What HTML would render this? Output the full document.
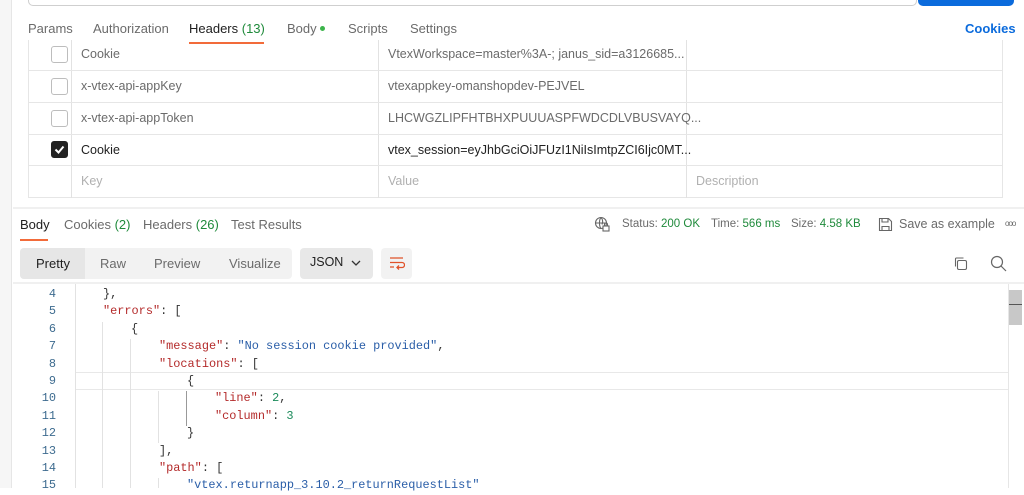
<!DOCTYPE html><html><head><style>
*{margin:0;padding:0;box-sizing:border-box}
body{width:1024px;height:488px;overflow:hidden;background:#fff;font-family:"Liberation Sans",sans-serif;font-size:12.5px;color:#212121;position:relative}
.a{position:absolute;white-space:nowrap}
.g{color:#6b6b6b}
.gr{color:#1f8a3b}
.mono{font-family:"Liberation Mono",monospace;font-size:11.9px}
.ln{position:absolute;left:20px;width:36px;text-align:right;color:#3d6b8f}
.k{color:#b42b2b}.s{color:#2a5ea8}.n{color:#1a8a5a}.p{color:#333}
.vl{position:absolute;width:1px;background:#e2e2e2}
.cb{position:absolute;left:51px;width:17px;height:17px;border:1px solid #bdbdbd;border-radius:3px;background:#fff}
</style></head><body>
<div class="a" style="left:0;top:0;width:12px;height:488px;background:#f6f6f6;border-right:1px solid #e6e6e6"></div>
<div class="a" style="left:28px;top:-10px;width:889px;height:16px;border:1px solid #cfcfcf;border-radius:5px"></div>
<div class="a" style="left:918px;top:-10px;width:96px;height:16px;background:#0b6bdc;border-radius:5px"></div>
<div class="a g" style="left:28px;top:21px;font-size:13px">Params</div>
<div class="a g" style="left:93px;top:21px;font-size:13px">Authorization</div>
<div class="a" style="left:189px;top:21px;font-size:13px">Headers <span class="gr">(13)</span></div>
<div class="a" style="left:189px;top:42px;width:75px;height:2px;background:#f26b3a"></div>
<div class="a g" style="left:287px;top:21px;font-size:13px">Body <span style="display:inline-block;width:5px;height:5px;border-radius:50%;background:#3cb44b;vertical-align:2px"></span></div>
<div class="a g" style="left:348px;top:21px;font-size:13px">Scripts</div>
<div class="a g" style="left:410px;top:21px;font-size:13px">Settings</div>
<div class="a" style="left:965px;top:21px;font-size:13px;color:#0b6bdc;font-weight:bold">Cookies</div>
<!-- table -->
<div class="a" style="left:28px;top:40px;width:975px;height:158px;border:1px solid #e6e6e6;border-top:none"></div>
<div class="vl" style="left:71px;top:40px;height:158px"></div>
<div class="vl" style="left:378px;top:40px;height:158px"></div>
<div class="vl" style="left:686px;top:40px;height:158px"></div>
<div class="a" style="left:28px;top:70px;width:975px;height:1px;background:#e6e6e6"></div>
<div class="a" style="left:28px;top:102px;width:975px;height:1px;background:#e6e6e6"></div>
<div class="a" style="left:28px;top:134px;width:975px;height:1px;background:#e6e6e6"></div>
<div class="a" style="left:28px;top:165px;width:975px;height:1px;background:#e6e6e6"></div>
<div class="cb" style="top:46px"></div><div class="cb" style="top:78px"></div><div class="cb" style="top:110px"></div>
<div class="cb" style="top:141px;background:#222;border-color:#222"><svg width="15" height="15" viewBox="0 0 15 15" style="position:absolute;left:0;top:0"><path d="M3.5 7.5l3 3 5-6" stroke="#fff" stroke-width="2" fill="none"/></svg></div>
<div class="a g" style="left:81px;top:47px">Cookie</div>
<div class="a g" style="left:81px;top:79px">x-vtex-api-appKey</div>
<div class="a g" style="left:81px;top:111px">x-vtex-api-appToken</div>
<div class="a" style="left:81px;top:143px">Cookie</div>
<div class="a" style="left:81px;top:174px;color:#b0b0b0">Key</div>
<div class="a g" style="left:388px;top:47px">VtexWorkspace=master%3A-; janus_sid=a3126685...</div>
<div class="a g" style="left:388px;top:79px">vtexappkey-omanshopdev-PEJVEL</div>
<div class="a g" style="left:388px;top:111px">LHCWGZLIPFHTBHXPUUUASPFWDCDLVBUSVAYQ...</div>
<div class="a" style="left:388px;top:143px">vtex_session=eyJhbGciOiJFUzI1NiIsImtpZCI6Ijc0MT...</div>
<div class="a" style="left:388px;top:174px;color:#b0b0b0">Value</div>
<div class="a" style="left:696px;top:174px;color:#b0b0b0">Description</div>
<div class="a" style="left:13px;top:207px;width:1011px;height:2px;background:#f0f0f0"></div>
<!-- response -->
<div class="a" style="left:20px;top:217px;font-size:13px">Body</div>
<div class="a" style="left:20px;top:239px;width:28px;height:2px;background:#f26b3a"></div>
<div class="a g" style="left:64px;top:217px;font-size:13px">Cookies <span class="gr">(2)</span></div>
<div class="a g" style="left:143px;top:217px;font-size:13px">Headers <span class="gr">(26)</span></div>
<div class="a g" style="left:231px;top:217px;font-size:13px">Test Results</div>
<svg class="a" style="left:594px;top:216px" width="16" height="16" viewBox="0 0 16 16" fill="none" stroke="#666" stroke-width="1.1"><circle cx="7" cy="7" r="5.5"/><path d="M1.5 7h11M7 1.5c-2 2-2 9 0 11M7 1.5c2 2 2 5 1 7"/><rect x="9" y="10" width="6" height="5" fill="#fff"/><path d="M10.5 10V8.5a1.5 1.5 0 013 0V10"/></svg>
<div class="a g" style="left:622px;top:218px;font-size:11.5px">Status: <span class="gr">200 OK</span></div>
<div class="a g" style="left:711px;top:218px;font-size:11.5px">Time: <span class="gr">566 ms</span></div>
<div class="a g" style="left:791px;top:218px;font-size:11.5px">Size: <span class="gr">4.58 KB</span></div>
<svg class="a" style="left:878px;top:217px" width="15" height="15" viewBox="0 0 15 15" fill="none" stroke="#666" stroke-width="1.1"><path d="M1.5 1.5h9l3 3v9h-12z"/><path d="M4 1.5v3.5h6V1.5M4 13.5v-4h7v4"/></svg>
<div class="a g" style="left:899px;top:217px;font-size:12.5px">Save as example</div>
<div class="a g" style="left:1005px;top:219px;font-size:8px;letter-spacing:-1px">ooo</div>
<div class="a" style="left:20px;top:248px;width:272px;height:31px;background:#f2f2f2;border-radius:4px"></div>
<div class="a" style="left:20px;top:248px;width:65px;height:31px;background:#e6e6e6;border-radius:4px 0 0 4px"></div>
<div class="a" style="left:36px;top:256px;font-size:13px">Pretty</div>
<div class="a g" style="left:100px;top:256px;font-size:13px">Raw</div>
<div class="a g" style="left:154px;top:256px;font-size:13px">Preview</div>
<div class="a g" style="left:229px;top:256px;font-size:13px">Visualize</div>
<div class="a" style="left:300px;top:248px;width:73px;height:31px;background:#e8e8e8;border-radius:4px"></div>
<div class="a" style="left:310px;top:255px;font-size:12.5px">JSON</div>
<svg class="a" style="left:351px;top:259px" width="10" height="8"><path d="M1 2l4 4 4-4" stroke="#333" stroke-width="1.3" fill="none"/></svg>
<div class="a" style="left:381px;top:248px;width:31px;height:31px;background:#f2f2f2;border-radius:4px"></div>
<svg class="a" style="left:389px;top:256px" width="16" height="15" fill="none" stroke="#e0522a" stroke-width="1.3"><path d="M1 2h13M1 6.5h12a2.5 2.5 0 010 5H8M10 9.5l-2 2 2 2M1 11h4"/></svg>
<svg class="a" style="left:953px;top:256px" width="15" height="15" fill="none" stroke="#666" stroke-width="1.1"><rect x="4.5" y="4.5" width="9" height="9" rx="1.5"/><path d="M2.5 10.5V3a1 1 0 011-1h7"/></svg>
<svg class="a" style="left:990px;top:255px" width="17" height="17" fill="none" stroke="#666" stroke-width="1.2"><circle cx="7" cy="7" r="5.5"/><path d="M11 11l5 5"/></svg>
<div class="a" style="left:13px;top:282px;width:1011px;height:2px;background:#f0f0f0"></div>
<!-- code -->
<div class="a" style="left:1008px;top:284px;width:1px;height:204px;background:#e6e6e6"></div>
<div class="a" style="left:1009px;top:290px;width:13px;height:35px;background:#c8c8c8"></div>
<div class="a" style="left:1009px;top:304px;width:13px;height:1px;background:#555"></div>
<div class="a" style="left:76px;top:372px;width:932px;height:18px;border-top:1px solid #e8e8e8;border-bottom:1px solid #e8e8e8"></div>
<div class="vl" style="left:75px;top:284px;height:204px"></div>
<div class="vl" style="left:102px;top:322px;height:166px"></div>
<div class="vl" style="left:130px;top:339px;height:149px"></div>
<div class="vl" style="left:158px;top:391px;height:52px"></div>
<div class="vl" style="left:158px;top:478px;height:10px"></div>
<div class="vl" style="left:186px;top:391px;height:35px;background:#999"></div>
<div class="mono" style="position:absolute;left:0;top:286px;line-height:17.4px">
<div class="ln" style="top:0">4</div><div class="ln" style="top:17.4px">5</div><div class="ln" style="top:34.8px">6</div><div class="ln" style="top:52.2px">7</div><div class="ln" style="top:69.6px">8</div><div class="ln" style="top:87px">9</div><div class="ln" style="top:104.4px">10</div><div class="ln" style="top:121.8px">11</div><div class="ln" style="top:139.2px">12</div><div class="ln" style="top:156.6px">13</div><div class="ln" style="top:174px">14</div><div class="ln" style="top:191.4px">15</div>
<div class="a" style="left:103px;top:0"><span class="p">},</span></div>
<div class="a" style="left:103px;top:17.4px"><span class="k">"errors"</span><span class="p">: [</span></div>
<div class="a" style="left:131px;top:34.8px"><span class="p">{</span></div>
<div class="a" style="left:159px;top:52.2px"><span class="k">"message"</span><span class="p">: </span><span class="s">"No session cookie provided"</span><span class="p">,</span></div>
<div class="a" style="left:159px;top:69.6px"><span class="k">"locations"</span><span class="p">: [</span></div>
<div class="a" style="left:187px;top:87px"><span class="p">{</span></div>
<div class="a" style="left:215px;top:104.4px"><span class="k">"line"</span><span class="p">: </span><span class="n">2</span><span class="p">,</span></div>
<div class="a" style="left:215px;top:121.8px"><span class="k">"column"</span><span class="p">: </span><span class="n">3</span></div>
<div class="a" style="left:187px;top:139.2px"><span class="p">}</span></div>
<div class="a" style="left:159px;top:156.6px"><span class="p">],</span></div>
<div class="a" style="left:159px;top:174px"><span class="k">"path"</span><span class="p">: [</span></div>
<div class="a" style="left:187px;top:191.4px"><span class="s">"vtex.returnapp_3.10.2_returnRequestList"</span></div>
</div>
</body></html>
